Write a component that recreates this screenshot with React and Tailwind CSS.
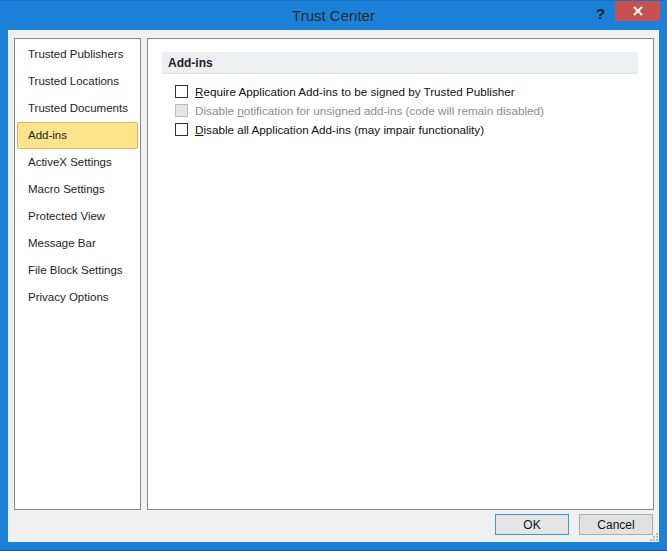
import React from "react";

const items = [
  "Trusted Publishers",
  "Trusted Locations",
  "Trusted Documents",
  "Add-ins",
  "ActiveX Settings",
  "Macro Settings",
  "Protected View",
  "Message Bar",
  "File Block Settings",
  "Privacy Options",
];

function Check({ disabled }) {
  return (
    <span
      className={
        "w-[13px] h-[13px] border shrink-0 " +
        (disabled ? "border-[#bcbcbc] bg-[#e6e6e6]" : "border-[#333333] bg-white")
      }
    />
  );
}

export default function App() {
  return (
    <div
      className="w-[667px] h-[551px] bg-[#1a80d8] border-t border-t-[#1572c4] border-b border-b-[#135fa6] flex flex-col overflow-hidden"
      style={{ fontFamily: '"Liberation Sans", Arial, sans-serif' }}
    >
      {/* title bar */}
      <div className="h-[29px] relative flex items-center justify-center shrink-0">
        <span className="text-[15px] text-[#2b2b2b] mt-[1px]">Trust Center</span>
        <span className="absolute left-[596px] top-[2px] text-[15px] font-bold text-[#222]">?</span>
        <div className="absolute left-[615px] top-0 w-[45px] h-[20px] bg-[#c75050] flex items-center justify-center">
          <svg width="10" height="10" viewBox="0 0 10 10">
            <path d="M1 1 L9 9 M9 1 L1 9" stroke="white" strokeWidth="2" />
          </svg>
        </div>
      </div>
      {/* client */}
      <div className="mx-[8px] flex-1 bg-[#f0f0f0] flex flex-col pt-[8px] pl-[6px] pr-[5px] mb-[8px]">
        <div className="flex gap-[6px] h-[472px]">
          <div className="w-[127px] bg-white border border-[#828790] pt-[2px] px-[2px] flex flex-col">
            {items.map((t) => (
              <div
                key={t}
                className={
                  "h-[27px] flex items-center pl-[10px] text-[11.5px] text-[#1e1e1e] border rounded-[2px] " +
                  (t === "Add-ins"
                    ? "bg-[#fde48c] border-[#e5b35b]"
                    : "border-transparent")
                }
              >
                {t}
              </div>
            ))}
          </div>
          <div className="w-[507px] bg-white border border-[#828790] pt-[13px] pl-[14px] pr-[15px]">
            <div className="h-[22px] bg-[#eeeff2] border-b border-[#e2e3e6] flex items-center pl-[6px] text-[12px] font-bold text-[#1e1e1e]">
              Add-ins
            </div>
            <div className="pl-[13px] pt-[8px] flex flex-col text-[11.7px]">
              <div className="h-[19px] flex items-center gap-[7px] text-[#111]">
                <Check />
                <span>
                  <u>R</u>equire Application Add-ins to be signed by Trusted Publisher
                </span>
              </div>
              <div className="h-[19px] flex items-center gap-[7px] text-[#8c8c8c]">
                <Check disabled />
                <span>
                  Disable <u>n</u>otification for unsigned add-ins (code will remain disabled)
                </span>
              </div>
              <div className="h-[19px] flex items-center gap-[7px] text-[#111]">
                <Check />
                <span>
                  <u>D</u>isable all Application Add-ins (may impair functionality)
                </span>
              </div>
            </div>
          </div>
        </div>
        <div className="flex justify-end gap-[10px] pt-[4px] pr-[1px] relative flex-1">
          <button className="w-[74px] h-[21px] border border-[#3c96e0] bg-[#e5e5e5] text-[12px] text-[#111] flex items-center justify-center">
            OK
          </button>
          <button className="w-[74px] h-[21px] border border-[#adadad] bg-[#e1e1e1] text-[12px] text-[#111] flex items-center justify-center">
            Cancel
          </button>
          <svg className="absolute right-[-4px] bottom-[1px]" width="8" height="8" viewBox="0 0 8 8">
            <rect x="6" y="0" width="2" height="2" fill="#bcbcbc" />
            <rect x="3" y="3" width="2" height="2" fill="#bcbcbc" />
            <rect x="6" y="3" width="2" height="2" fill="#bcbcbc" />
            <rect x="0" y="6" width="2" height="2" fill="#bcbcbc" />
            <rect x="3" y="6" width="2" height="2" fill="#bcbcbc" />
            <rect x="6" y="6" width="2" height="2" fill="#bcbcbc" />
          </svg>
        </div>
      </div>
    </div>
  );
}
